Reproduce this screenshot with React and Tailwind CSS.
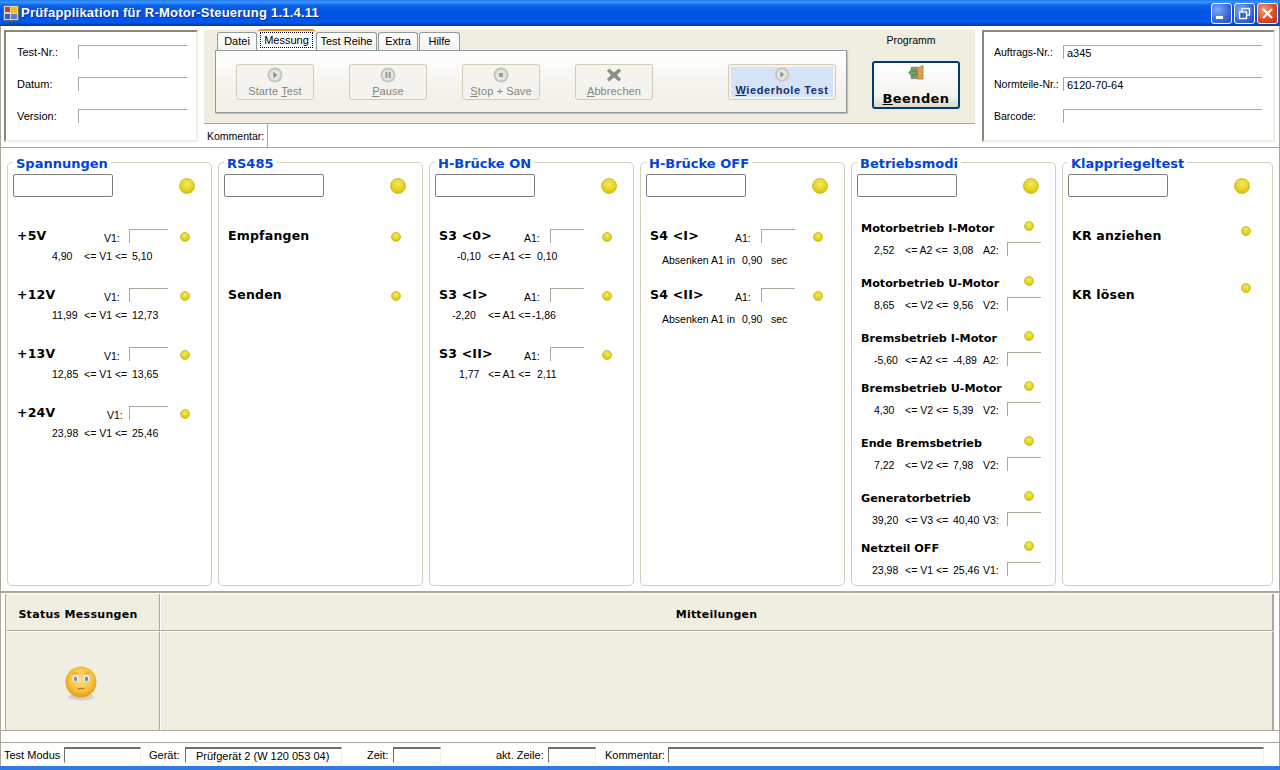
import React from "react";

const ui = "font-['Liberation_Sans',Arial,sans-serif]";
const wide = "font-['DejaVu_Sans',Verdana,sans-serif]";

function Led({ big = false, className = "" }) {
  return (
    <span
      className={`block shrink-0 rounded-full bg-[radial-gradient(circle_at_50%_35%,#f2e96a_0%,#e6d316_55%,#c9b40a_100%)] border border-[#c9bd3c] ${big ? "w-4 h-4" : "w-[10px] h-[10px]"} ${className}`}
    />
  );
}

function Field({ w, value = "", className = "" }) {
  return (
    <span className={`block h-[14px] shrink-0 border-t border-l border-[#aca899] bg-white pl-[3px] leading-[14px] text-[11px] text-black ${className}`} style={{ width: w }}>
      {value}
    </span>
  );
}

function Range({ x, a, b, op, far }) {
  return (
    <div className={`${far ? "mt-[10px]" : "mt-[6px]"} flex h-[14px] items-center whitespace-nowrap text-[10.5px] leading-none text-black`}>
      <span className="shrink-0" style={{ marginLeft: x[0] - 1, width: x[1] - x[0] }}>{a}</span>
      <span className="shrink-0" style={{ width: x[2] - x[1] }}>{op}</span>
      <span className="shrink-0">{b}</span>
    </div>
  );
}

function Row({ title, label, labelX = 96, inputX = 121, inputW = 39, pad = 9, range, ledClass = "mt-[3px]", ledX = 172 }) {
  return (
    <div className="h-[59px] shrink-0">
      <div className="flex h-4 items-center">
        <span className={`${wide} mt-[2px] shrink-0 text-[12.5px] leading-none font-semibold tracking-[0.2px] text-black`} style={{ marginLeft: pad, width: (label ? labelX : ledX) - pad }}>{title}</span>
        {label ? (
          <>
            <span className="mt-[7px] shrink-0 text-[10.5px] leading-none text-black" style={{ width: inputX - labelX }}>{label}</span>
            <Field w={inputW} className="mt-[2px]" />
            <span className="shrink-0" style={{ width: ledX - inputX - inputW }} />
          </>
        ) : null}
        <Led className={ledClass} />
      </div>
      {range}
    </div>
  );
}

function ModeRow({ title, a, b, op, lab, mb, narrow }) {
  return (
    <div className="shrink-0" style={{ marginBottom: mb }}>
      <div className="flex h-4 items-center">
        <span className={`${wide} ml-[9px] mt-[2px] w-[163px] shrink-0 whitespace-nowrap text-[11.2px] leading-none font-bold text-black`}>{title}</span>
        <Led className="-mt-[4px]" />
      </div>
      <div className="mt-[6px] flex h-[14px] items-center pt-[2px] text-[10.5px] leading-none text-black">
        <span className={`${narrow ? "ml-[20px] w-[33px]" : "ml-[22px] w-[31px]"} shrink-0`}>{a}</span>
        <span className="w-[48px] shrink-0">{op}</span>
        <span className="w-[30px] shrink-0">{b}</span>
        <span className="w-[24px] shrink-0">{lab}</span>
        <Field w={34} className="-mt-[2px]" />
      </div>
    </div>
  );
}

function Group({ title, children, wider, listClass = "mt-[30px]" }) {
  return (
    <section className={`flex h-[424px] shrink-0 flex-col rounded-[5px] border border-[#d0d0bf] bg-white ${wider ? "w-[211px]" : "w-[205px]"}`}>
      <h2 className={`${wide} -mt-[8px] ml-[5px] h-4 self-start bg-white px-[3px] text-[13px] leading-[18px] font-semibold text-[#0046d5]`}>{title}</h2>
      <div className="mt-[3px] flex items-center">
        <div className="ml-[5px] h-[23px] w-[100px] shrink-0 rounded-[2px] border-[1.5px] border-[#7f7f7f] bg-white" />
        <Led big className="ml-[66px]" />
      </div>
      <div className={`flex flex-col ${listClass}`}>{children}</div>
    </section>
  );
}

function RoundIcon({ kind }) {
  return (
    <svg width="16" height="16" viewBox="0 0 16 16" className="block">
      <circle cx="8" cy="8" r="7.5" fill="#c4c4c0" />
      <circle cx="8" cy="8" r="5.5" fill="#e4e4e0" />
      {kind === "play" && <path d="M6.3 4.8 L10.4 8 L6.3 11.2 Z" fill="#8f8f8b" />}
      {kind === "pause" && <path d="M5.5 5h2v6h-2zM8.7 5h2v6h-2z" fill="#9a9a96" />}
      {kind === "stop" && <rect x="6" y="6" width="4" height="4" fill="#9a9a96" />}
    </svg>
  );
}

function CrossIcon() {
  return (
    <svg width="16" height="16" viewBox="0 0 16 16" className="block">
      <path d="M3 1.5 L8 5.5 L13 1.5 L15 4 L11 8 L15 12 L13 14.5 L8 10.5 L3 14.5 L1 12 L5 8 L1 4 Z" fill="#8c8c88" />
    </svg>
  );
}

function ToolButton({ icon, children, cls = "" }) {
  return (
    <button className={`flex h-9 w-[78px] shrink-0 flex-col items-center rounded-[3px] border border-[#cfccba] bg-[#f4f3ee] pt-[2px] text-[11px] leading-[14px] text-[#85857b] ${cls}`}>
      <span className="flex h-4 items-center">{icon}</span>
      <span className="mt-[1px] tracking-[0.1px]">{children}</span>
    </button>
  );
}

function Tab({ children, w, active }) {
  return active ? (
    <div className="relative z-10 -mt-[3px] h-[21px] shrink-0 rounded-t-[3px] border-t-2 border-[#e68b2c] bg-white px-[2px] pt-[1px]" style={{ width: w }}>
      <div className="flex h-[16px] items-center justify-center border border-dotted border-black text-[11px] leading-none">{children}</div>
    </div>
  ) : (
    <div className="flex h-[18px] shrink-0 items-center justify-center rounded-t-[3px] border border-b-0 border-[#919b9c] bg-[linear-gradient(#ffffff,#f3f3ef)] text-[11px] leading-none" style={{ width: w }}>
      {children}
    </div>
  );
}

function InfoPanel({ w, labelW, left, rows, fieldW, labelClass = "text-[11px]" }) {
  return (
    <div className="flex h-[112px] shrink-0 flex-col border-2 border-[#f1efe2] border-t-[#8a877a] border-l-[#8a877a] bg-white pt-[13px]" style={{ width: w, paddingLeft: left }}>
      {rows.map(([l, v]) => (
        <div key={l} className="mb-[18px] flex h-[14px] items-center">
          <span className={`shrink-0 whitespace-nowrap leading-none ${labelClass}`} style={{ width: labelW }}>{l}</span>
          <Field w={fieldW} value={v} />
        </div>
      ))}
    </div>
  );
}

function StatusField({ w, value = "" }) {
  return (
    <span className="block h-[16px] shrink-0 overflow-hidden whitespace-nowrap border border-t-2 border-[#f1efe2] border-t-[#716f64] border-l-[#716f64] bg-white pl-[10px] text-[11px] leading-[14px]" style={{ width: w }}>
      {value}
    </span>
  );
}

function Smiley() {
  return (
    <svg width="34" height="36" viewBox="0 0 34 36" className="block">
      <defs>
        <radialGradient id="sm" cx="50%" cy="42%" r="58%">
          <stop offset="0%" stopColor="#fde08a" />
          <stop offset="60%" stopColor="#f8c544" />
          <stop offset="100%" stopColor="#e09a1c" />
        </radialGradient>
      </defs>
      <ellipse cx="17" cy="31" rx="13" ry="3.5" fill="#d6d3c6" />
      <circle cx="17" cy="16" r="15.5" fill="url(#sm)" />
      <ellipse cx="11.5" cy="12.5" rx="3" ry="3.6" fill="#eef1e8" />
      <ellipse cx="22.5" cy="12.5" rx="3" ry="3.6" fill="#eef1e8" />
      <ellipse cx="11.5" cy="13" rx="1.6" ry="2.4" fill="#5b90c8" />
      <ellipse cx="22.5" cy="13" rx="1.6" ry="2.4" fill="#5b90c8" />
      <path d="M8 7.5 Q11 6 14 8M20 8 Q23 6 26 7.5" stroke="#d89a2a" strokeWidth="1" fill="none" />
      <path d="M13.5 23 Q17 21.8 20.5 23" stroke="#b57a16" strokeWidth="1.3" fill="none" />
    </svg>
  );
}

function AppIcon() {
  return (
    <svg width="16" height="16" viewBox="0 0 16 16" className="block shrink-0">
      <rect x="0.5" y="0.5" width="15" height="15" fill="#d9d4c4" stroke="#6a6a6a" />
      <rect x="2" y="2" width="5" height="5" fill="#d43b1f" />
      <rect x="8" y="2" width="6" height="6" fill="#f5c000" />
      <rect x="2" y="9" width="5" height="5" fill="#2f5fd0" />
      <rect x="8" y="9" width="6" height="5" fill="#4d7fe0" />
    </svg>
  );
}

function DoorIcon() {
  return (
    <svg width="16" height="15" viewBox="0 0 18 17" className="block">
      <rect x="3" y="2" width="8" height="14" fill="#8d8d88" />
      <path d="M11 3 L17 0.5 V16 H11 Z" fill="#dba253" stroke="#a8702a" strokeWidth="0.7" />
      <path d="M0.5 8.5 L4.5 5 V7 H10 V11 H4.5 V13 Z" fill="#58b847" stroke="#2f7e2a" strokeWidth="0.7" />
    </svg>
  );
}

function WinBtn({ children, red }) {
  return (
    <div className={`flex h-[21px] w-[21px] items-center justify-center rounded-[3px] border border-white ${red ? "bg-[radial-gradient(circle_at_30%_30%,#ee9a80,#d6481f_60%,#b83010)]" : "bg-[radial-gradient(circle_at_30%_30%,#7fa6f5,#3a68dc_60%,#2348b8)]"}`}>
      {children}
    </div>
  );
}

const rangeOp = "<= V1 <=";
const a1 = { label: "A1:", pad: 9, labelX: 94, inputX: 120, inputW: 34 };

export default function App() {
  return (
    <div className={`${ui} relative flex h-[770px] w-[1280px] flex-col overflow-hidden bg-white text-black`}>
      <header className="flex h-[26px] shrink-0 items-center bg-[linear-gradient(#1f77ee_0%,#3a95ff_8%,#0a5fe8_22%,#0053e2_50%,#0058ee_85%,#0043b8_96%,#003a9c_100%)] pl-[3px] pr-[2px]">
        <AppIcon />
        <h1 className={`${ui} ml-[2px] flex-1 text-[13px] font-bold tracking-[0.23px] text-white [text-shadow:1px_1px_#0a2f8c]`}>Prüfapplikation für R-Motor-Steuerung 1.1.4.11</h1>
        <div className="flex gap-[2px]">
          <WinBtn><span className="mt-[9px] -ml-[5px] block h-[3px] w-[7px] bg-white" /></WinBtn>
          <WinBtn>
            <svg width="13" height="13" viewBox="0 0 13 13" fill="none" stroke="white" strokeWidth="1.3"><rect x="4" y="1.5" width="7.5" height="6.5" /><rect x="1.5" y="5" width="7" height="6.5" fill="#3a68dc" /></svg>
          </WinBtn>
          <WinBtn red>
            <svg width="13" height="13" viewBox="0 0 13 13" stroke="white" strokeWidth="2.2"><path d="M2 2 L11 11 M11 2 L2 11" /></svg>
          </WinBtn>
        </div>
      </header>

      <main className="flex min-h-0 flex-1 flex-col border-x border-[#aca899]">
        <div className="flex h-[122px] shrink-0 border-b border-[#aca899] pt-[4px] pl-[3px]">
          <InfoPanel w={194} labelW={61} left={11} fieldW={109} rows={[["Test-Nr.:", ""], ["Datum:", ""], ["Version:", ""]]} />

          <div className="ml-[6px] w-[771px] shrink-0">
            <div className="flex h-[94px] border-b border-[#aca899] bg-[#f0eee1]">
              <div className="ml-[11px] w-[632px] shrink-0 pt-[2px]">
                <div className="flex h-[18px] gap-px pl-[2px]">
                  <Tab w={40}>Datei</Tab>
                  <Tab w={57} active>Messung</Tab>
                  <Tab w={61}>Test Reihe</Tab>
                  <Tab w={40}>Extra</Tab>
                  <Tab w={41}>Hilfe</Tab>
                </div>
                <div className="flex h-[63px] w-[632px] items-start border border-[#919b9c] bg-[linear-gradient(#ffffff,#f3f1ea_70%)] pl-[20px] pt-[13px] shadow-[1px_1px_1px_#c5c2b4]">
                  <ToolButton icon={<RoundIcon kind="play" />}>Starte <u>T</u>est</ToolButton>
                  <ToolButton cls="ml-[35px]" icon={<RoundIcon kind="pause" />}><u>P</u>ause</ToolButton>
                  <ToolButton cls="ml-[35px]" icon={<RoundIcon kind="stop" />}><u>S</u>top + Save</ToolButton>
                  <ToolButton cls="ml-[35px]" icon={<CrossIcon />}><u>A</u>bbrechen</ToolButton>
                  <button className="ml-[75px] h-9 w-[108px] shrink-0 rounded-[3px] border border-[#cfccba] bg-[#f4f3ee] p-[2px]">
                    <span className="flex h-full flex-col items-center bg-[#d6e3f6] text-[11px] leading-[14px] font-bold text-[#10306e]">
                      <RoundIcon kind="play" />
                      <span className="mt-[1px] tracking-[0.6px]"><u>W</u>iederhole Test</span>
                    </span>
                  </button>
                </div>
              </div>
              <div className="ml-[25px] flex w-[88px] shrink-0 flex-col items-center">
                <span className="mt-[3px] -ml-[10px] h-[14px] text-[10.5px] leading-[14px]">Programm</span>
                <button className="mt-[14px] flex h-[48px] w-[88px] flex-col items-center rounded-[3px] border-2 border-[#003c74] bg-[linear-gradient(#ffffff,#f4f3ee_75%,#dcd8cc)] pt-[2px]">
                  <DoorIcon />
                  <span className={`${wide} mt-[11px] text-[13px] leading-4 font-semibold tracking-[0.4px]`}><u>B</u>eenden</span>
                </button>
              </div>
            </div>
            <div className="flex h-6 items-stretch">
              <span className="ml-[3px] w-[60px] shrink-0 self-center whitespace-nowrap text-[10.5px] leading-none">Kommentar:</span>
              <span className="block flex-1 border-l border-[#aca899]" />
            </div>
          </div>

          <div className="ml-[7px]">
            <InfoPanel w={293} labelW={69} left={10} fieldW={199} labelClass="text-[10.5px]" rows={[["Auftrags-Nr.:", "a345"], ["Normteile-Nr.:", "6120-70-64"], ["Barcode:", ""]]} />
          </div>
        </div>

        <div className="flex h-[445px] shrink-0 gap-[6px] border-b-2 border-[#aca899] pt-[14px] pl-[6px]">
          <Group title="Spannungen">
            <Row title="+5V" label="V1:" range={<Range x={[45, 77, 125]} a="4,90" op={rangeOp} b="5,10" />} />
            <Row title="+12V" label="V1:" range={<Range x={[45, 77, 125]} a="11,99" op={rangeOp} b="12,73" />} />
            <Row title="+13V" label="V1:" range={<Range x={[45, 77, 125]} a="12,85" op={rangeOp} b="13,65" />} />
            <Row title="+24V" label="V1:" labelX={99} range={<Range x={[45, 77, 125]} a="23,98" op={rangeOp} b="25,46" />} />
          </Group>

          <Group title="RS485">
            <Row title="Empfangen" />
            <Row title="Senden" />
          </Group>

          <Group title="H-Brücke ON">
            <Row title="S3 <0>" {...a1} range={<Range x={[28, 59, 108]} a="-0,10" op="<= A1 <=" b="0,10" />} />
            <Row title="S3 <I>" {...a1} range={<Range x={[23, 59, 103]} a="-2,20" op="<= A1 <=" b="-1,86" />} />
            <Row title="S3 <II>" {...a1} range={<Range x={[30, 59, 108]} a="1,77" op="<= A1 <=" b="2,11" />} />
          </Group>

          <Group title="H-Brücke OFF">
            <Row title="S4 <I>" {...a1} range={<Range far x={[22, 102, 131]} a="Absenken A1 in" op="0,90" b="sec" />} />
            <Row title="S4 <II>" {...a1} range={<Range far x={[22, 102, 131]} a="Absenken A1 in" op="0,90" b="sec" />} />
          </Group>

          <Group title="Betriebsmodi" listClass="mt-[23px]">
            <ModeRow title="Motorbetrieb I-Motor" a="2,52" op="<= A2 <=" b="3,08" lab="A2:" mb={19} />
            <ModeRow title="Motorbetrieb U-Motor" a="8,65" op="<= V2 <=" b="9,56" lab="V2:" mb={19} />
            <ModeRow title="Bremsbetrieb I-Motor" a="-5,60" op="<= A2 <=" b="-4,89" lab="A2:" mb={14} />
            <ModeRow title="Bremsbetrieb U-Motor" a="4,30" op="<= V2 <=" b="5,39" lab="V2:" mb={19} />
            <ModeRow title="Ende Bremsbetrieb" a="7,22" op="<= V2 <=" b="7,98" lab="V2:" mb={19} />
            <ModeRow title="Generatorbetrieb" narrow a="39,20" op="<= V3 <=" b="40,40" lab="V3:" mb={14} />
            <ModeRow title="Netzteil OFF" narrow a="23,98" op="<= V1 <=" b="25,46" lab="V1:" mb={0} />
          </Group>

          <Group title="Klappriegeltest" wider>
            <Row title="KR anziehen" ledX={178} ledClass="-mt-[8px]" />
            <Row title="KR lösen" ledX={178} ledClass="-mt-[12px]" />
          </Group>
        </div>

        <div className="flex h-[138px] shrink-0 flex-col border-b border-[#aca899] pl-[4px] pr-[5px] pt-[1px]">
          <div className="grid h-[136px] grid-cols-[153px_1fr] grid-rows-[37px_1fr] border-l border-[#aca899] bg-[#f0eee1] pl-[1px]">
            <div className={`${wide} flex items-center justify-center border-r border-b border-[#aca899] pt-[6px] pr-[10px] text-[11px] font-bold tracking-[0.3px] whitespace-nowrap`}>Status Messungen</div>
            <div className={`${wide} flex items-center justify-center border-l border-b border-r-2 border-[#aca899] border-l-white pt-[6px] text-[11px] font-bold tracking-[0.2px]`}>Mitteilungen</div>
            <div className="flex items-center justify-center border-t border-r border-[#aca899] border-t-white pt-[6px] pr-[5px]"><Smiley /></div>
            <div className="border-t border-l border-r-2 border-[#aca899] border-t-white border-l-white" />
          </div>
        </div>

        <div className="h-3 shrink-0 border-b border-[#aca899]" />

        <footer className="flex flex-1 items-center pl-[3px] text-[11px] leading-none">
          <span className="mt-[2px] w-[60px] shrink-0">Test Modus</span>
          <StatusField w={77} />
          <span className="mt-[2px] ml-[8px] w-[36px] shrink-0">Gerät:</span>
          <StatusField w={157} value="Prüfgerät 2 (W 120 053 04)" />
          <span className="mt-[2px] ml-[25px] w-[26px] shrink-0">Zeit:</span>
          <StatusField w={48} />
          <span className="mt-[2px] ml-[55px] w-[52px] shrink-0">akt. Zeile:</span>
          <StatusField w={48} />
          <span className="mt-[2px] ml-[9px] w-[63px] shrink-0">Kommentar:</span>
          <StatusField w={596} />
        </footer>
      </main>
      <div className="h-1 shrink-0 bg-[#2f7be0]" />
    </div>
  );
}
